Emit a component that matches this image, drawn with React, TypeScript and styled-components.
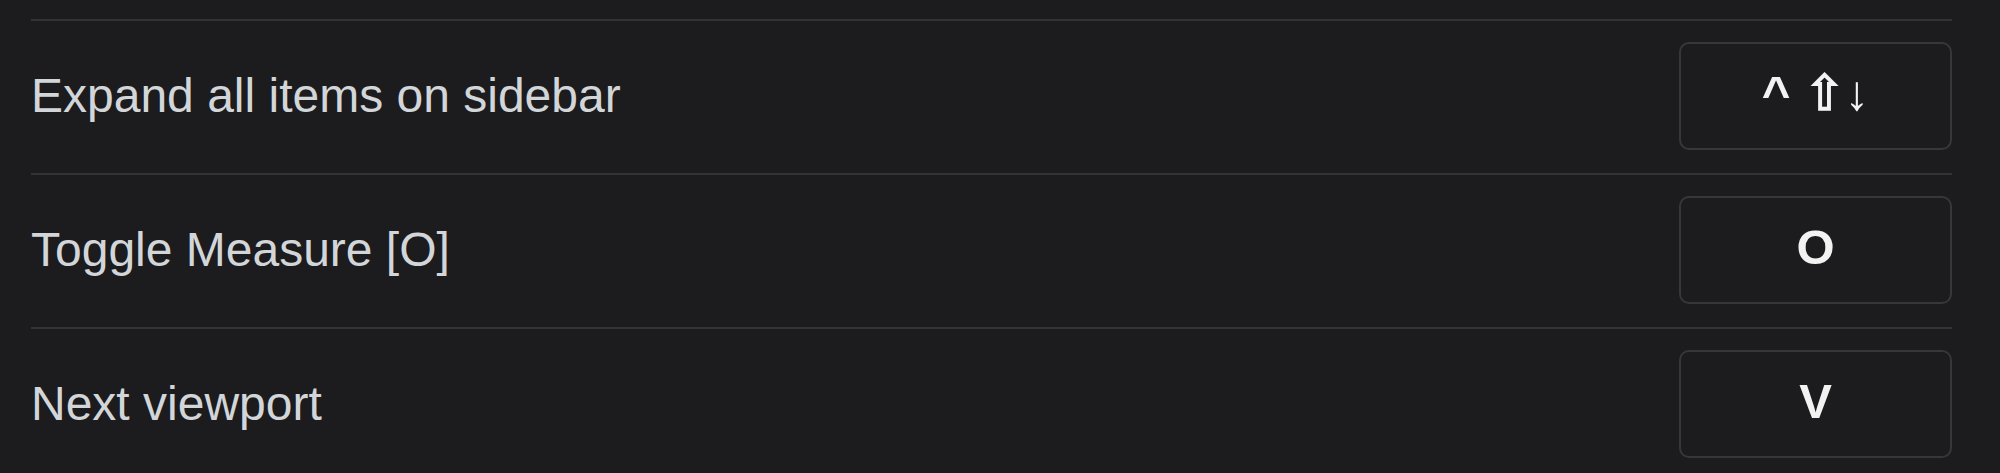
import React from "react";
import styled, { createGlobalStyle } from "styled-components";

const GlobalStyle = createGlobalStyle`
  html, body {
    margin: 0;
    padding: 0;
    background: #1c1c1f;
  }
  body {
    font-family: "Liberation Sans", Arial, sans-serif;
  }
`;

type Shortcut = {
  label: string;
  keys: string;
};

const shortcuts: Shortcut[] = [
  { label: "Expand all items on sidebar", keys: "^ ⇧↓" },
  { label: "Toggle Measure [O]", keys: "O" },
  { label: "Next viewport", keys: "V" },
];

const Page = styled.div`
  min-height: 473px;
  background: #1c1c1f;
  padding: 19px 48px 0 31px;
  box-sizing: border-box;
`;

const List = styled.div`
  display: flex;
  flex-direction: column;
`;

const Row = styled.div`
  display: flex;
  align-items: center;
  justify-content: space-between;
  border-top: 2px solid #323336;
  padding: 21px 0 23px;
`;

const Label = styled.span`
  font-size: 48px;
  color: #d3d6d9;
  line-height: 1;
`;

const KeyBox = styled.div`
  width: 273px;
  height: 108px;
  box-sizing: border-box;
  border: 2px solid #36373a;
  border-radius: 10px;
  display: flex;
  align-items: center;
  justify-content: center;
  padding-bottom: 6px;
  font-size: 49px;
  font-weight: 700;
  color: #f2f2f2;
  white-space: pre;
`;

export default function App() {
  return (
    <>
      <GlobalStyle />
      <Page>
        <List>
          {shortcuts.map((s) => (
            <Row key={s.label}>
              <Label>{s.label}</Label>
              <KeyBox>{s.keys}</KeyBox>
            </Row>
          ))}
        </List>
      </Page>
    </>
  );
}
